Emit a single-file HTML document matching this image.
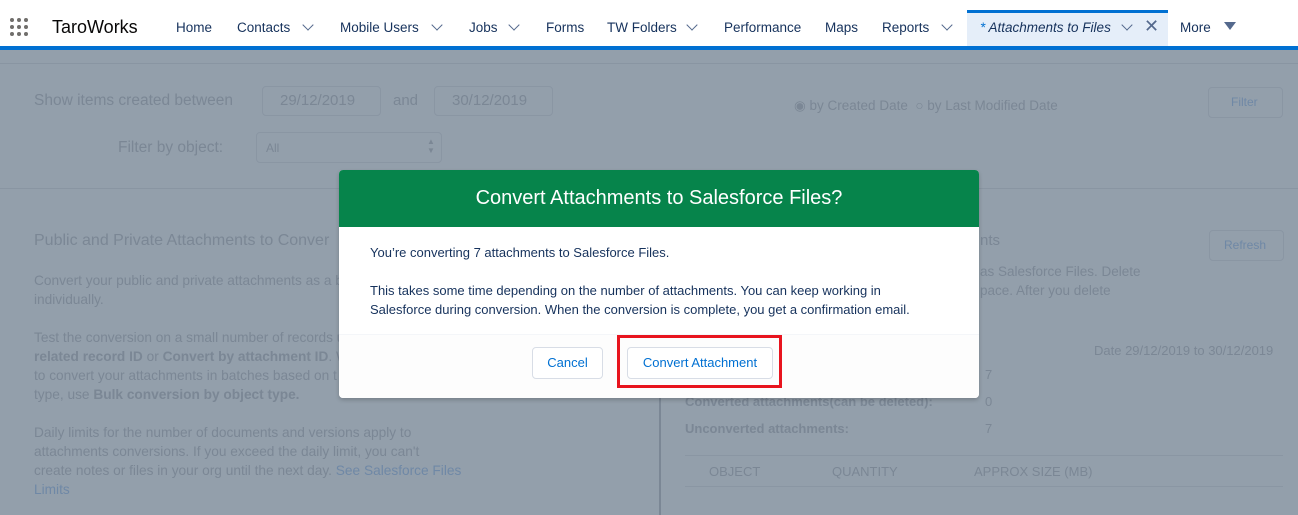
<!DOCTYPE html>
<html><head><meta charset="utf-8"><style>
*{box-sizing:border-box;margin:0;padding:0}
body{width:1298px;height:515px;overflow:hidden;font-family:"Liberation Sans",sans-serif;background:#fff;position:relative}
.nav{position:absolute;left:0;top:0;width:1298px;height:47px;background:#fff;font-size:13.5px;color:#16325c}
.nav span{position:absolute;top:20px}
.chev{display:inline-block;width:8px;height:8px;border-right:1.5px solid #54698d;border-bottom:1.5px solid #54698d;transform:rotate(45deg);position:absolute;top:21px}
.blue{position:absolute;left:0;top:46px;width:1298px;height:4px;background:#0070d2}
.page{position:absolute;left:0;top:50px;width:1298px;height:465px;background:#939fab;color:#7b8795}
.t{position:absolute;white-space:nowrap}
.box{position:absolute;border:1px solid #8a96a3;border-radius:4px}
.modal{position:absolute;left:339px;top:170px;width:640px;height:228px;background:#fff;border-radius:4px;overflow:hidden;box-shadow:0 2px 4px rgba(0,0,0,.2)}
.mh{height:57px;background:#06844b;color:#fff;font-size:20px;text-align:center;line-height:57px}
.mb{padding:16px 31px;font-size:13px;color:#16325c;line-height:19px}
.btn{position:absolute;top:177px;height:32px;border:1px solid #d8dde6;border-radius:4px;color:#0070d2;font-size:13px;text-align:center;line-height:30px;background:#fff}
</style></head><body>
<div class="nav">
<div style="position:absolute;left:9px;top:18px;width:22px;height:20px">
<svg width="22" height="20"><g fill="#706e6b"><circle cx="3" cy="2" r="2"/><circle cx="10" cy="2" r="2"/><circle cx="17" cy="2" r="2"/><circle cx="3" cy="9" r="2"/><circle cx="10" cy="9" r="2"/><circle cx="17" cy="9" r="2"/><circle cx="3" cy="16" r="2"/><circle cx="10" cy="16" r="2"/><circle cx="17" cy="16" r="2"/></g></svg></div>
<span style="left:52px;top:17px;font-size:18px;color:#080707">TaroWorks</span>
<span style="left:176px">Home</span>
<span style="left:237px">Contacts</span><i class="chev" style="left:304px"></i>
<span style="left:340px">Mobile Users</span><i class="chev" style="left:433px"></i>
<span style="left:469px">Jobs</span><i class="chev" style="left:510px"></i>
<span style="left:546px">Forms</span>
<span style="left:607px">TW Folders</span><i class="chev" style="left:688px"></i>
<span style="left:724px">Performance</span>
<span style="left:825px">Maps</span>
<span style="left:882px">Reports</span><i class="chev" style="left:943px"></i>
<div style="position:absolute;left:967px;top:10px;width:201px;height:37px;background:#e5eef9;border-top:3px solid #0070d2"></div>
<span style="left:980px;font-style:italic"><span style="position:static;color:#0070d2">*</span> Attachments to Files</span><i class="chev" style="left:1123px"></i>
<span style="left:1144px;top:16px;font-size:18px;color:#54698d">✕</span>
<span style="left:1180px">More</span>
<span style="left:1224px;top:22px;width:0;height:0;border-left:6px solid transparent;border-right:6px solid transparent;border-top:8px solid #54698d"></span>
</div>
<div class="blue"></div>
<div class="page">
<div style="position:absolute;left:0;top:13px;width:1298px;height:1px;background:#8995a2"></div>
<div style="position:absolute;left:0;top:138px;width:1298px;height:1px;background:#8995a2"></div>
<div style="position:absolute;left:659px;top:340px;width:2px;height:125px;background:#7b8795"></div>
<div class="t" style="left:34px;top:42px;font-size:15.5px">Show items created between</div>
<div class="box" style="left:262px;top:36px;width:119px;height:30px"></div><div class="t" style="left:280px;top:42px;font-size:15px">29/12/2019</div>
<div class="t" style="left:393px;top:42px;font-size:15px">and</div>
<div class="box" style="left:434px;top:36px;width:119px;height:30px"></div><div class="t" style="left:452px;top:42px;font-size:15px">30/12/2019</div>
<div class="t" style="left:118px;top:89px;font-size:15.5px">Filter by object:</div>
<div class="box" style="left:256px;top:82px;width:186px;height:31px"></div><div class="t" style="left:266px;top:91px;font-size:12px">All</div>
<div class="t" style="left:427px;top:87px;font-size:8px;line-height:9px">▲<br>▼</div>
<div class="t" style="left:794px;top:48px;font-size:13.5px">◉ by Created Date &nbsp;○ by Last Modified Date</div>
<div class="box" style="left:1208px;top:37px;width:75px;height:31px"></div><div class="t" style="left:1231px;top:45px;font-size:12px;color:#6f88a6">Filter</div>
<div class="t" style="left:34px;top:182px;font-size:16px">Public and Private Attachments to Conver</div>
<div class="t" style="left:34px;top:221px;font-size:13.7px;line-height:19px">Convert your public and private attachments as a b<br>individually.<br><br>Test the conversion on a small number of records u<br><b>related record ID</b> or <b>Convert by attachment ID</b>. W<br>to convert your attachments in batches based on t<br>type, use <b>Bulk conversion by object type.</b><br><br>Daily limits for the number of documents and versions apply to<br>attachments conversions. If you exceed the daily limit, you can't<br>create notes or files in your org until the next day. <span style="color:#6f88a6">See Salesforce Files<br>Limits</span></div>
<div class="t" style="left:980px;top:182px;font-size:15px">nts</div>
<div class="t" style="left:980px;top:212px;font-size:13.5px;line-height:19px">as Salesforce Files. Delete<br>pace. After you delete</div>
<div class="box" style="left:1209px;top:180px;width:75px;height:31px"></div><div class="t" style="left:1224px;top:188px;font-size:12px;color:#6f88a6">Refresh</div>
<div class="t" style="left:1094px;top:293px;font-size:13px">Date 29/12/2019 to 30/12/2019</div>
<div class="t" style="left:985px;top:317px;font-size:13px">7</div>
<div class="t" style="left:685px;top:344px;font-size:13px"><b>Converted attachments(can be deleted):</b></div>
<div class="t" style="left:985px;top:344px;font-size:13px">0</div>
<div class="t" style="left:685px;top:371px;font-size:13px"><b>Unconverted attachments:</b></div>
<div class="t" style="left:985px;top:371px;font-size:13px">7</div>
<div style="position:absolute;left:685px;top:405px;width:598px;height:32px;border-top:1px solid #8a96a3;border-bottom:1px solid #8a96a3"></div>
<div class="t" style="left:709px;top:414px;font-size:13px">OBJECT</div>
<div class="t" style="left:832px;top:414px;font-size:13px">QUANTITY</div>
<div class="t" style="left:974px;top:414px;font-size:13px">APPROX SIZE (MB)</div>
</div>
<div class="modal">
<div class="mh">Convert Attachments to Salesforce Files?</div>
<div class="mb">You’re converting 7 attachments to Salesforce Files.<br><br>This takes some time depending on the number of attachments. You can keep working in<br>Salesforce during conversion. When the conversion is complete, you get a confirmation email.</div>
<div style="position:absolute;left:0;top:164px;width:640px;height:64px;background:#fdfdfd;border-top:1px solid #f4f6f9"></div>
<div class="btn" style="left:193px;width:71px">Cancel</div>
<div class="btn" style="left:288px;width:146px">Convert Attachment</div>
</div>
<div style="position:absolute;left:617px;top:335px;width:165px;height:53px;border:3px solid #e8141e"></div>
</body></html>
